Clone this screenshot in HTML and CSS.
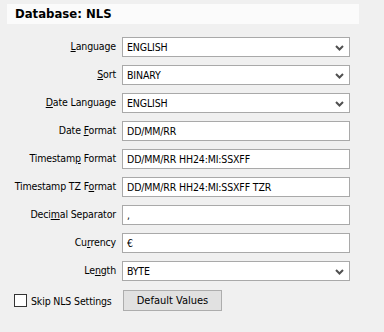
FILE: index.html
```html
<!DOCTYPE html>
<html lang="en">
<head>
    <meta charset="UTF-8">
    <title>Database: NLS</title>
    <link rel="stylesheet" href="styles.css">
</head>
<body>
    <div class="header">Database: NLS</div>

    <!-- NLS parameters -->
    <form class="nls-form">
        <label class="field-label"><u>L</u>anguage</label>
        <div class="combo"><span>ENGLISH</span><svg class="chevron" width="9" height="6" viewBox="0 0 9 6"><path d="M1 1 L4.5 4.5 L8 1" fill="none" stroke="#505050" stroke-width="2"/></svg></div>

        <label class="field-label"><u>S</u>ort</label>
        <div class="combo"><span>BINARY</span><svg class="chevron" width="9" height="6" viewBox="0 0 9 6"><path d="M1 1 L4.5 4.5 L8 1" fill="none" stroke="#505050" stroke-width="2"/></svg></div>

        <label class="field-label"><u>D</u>ate Language</label>
        <div class="combo"><span>ENGLISH</span><svg class="chevron" width="9" height="6" viewBox="0 0 9 6"><path d="M1 1 L4.5 4.5 L8 1" fill="none" stroke="#505050" stroke-width="2"/></svg></div>

        <label class="field-label">Date <u>F</u>ormat</label>
        <input class="text-input" type="text" value="DD/MM/RR">

        <label class="field-label">Timestam<u>p</u> Format</label>
        <input class="text-input" type="text" value="DD/MM/RR HH24:MI:SSXFF">

        <label class="field-label">Timestamp TZ F<u>o</u>rmat</label>
        <input class="text-input" type="text" value="DD/MM/RR HH24:MI:SSXFF TZR">

        <label class="field-label">Deci<u>m</u>al Separator</label>
        <input class="text-input" type="text" value=",">

        <label class="field-label">Cu<u>r</u>rency</label>
        <input class="text-input" type="text" value="€">

        <label class="field-label">Le<u>n</u>gth</label>
        <div class="combo"><span>BYTE</span><svg class="chevron" width="9" height="6" viewBox="0 0 9 6"><path d="M1 1 L4.5 4.5 L8 1" fill="none" stroke="#505050" stroke-width="2"/></svg></div>
    </form>

    <div class="footer">
        <label class="skip"><span class="checkbox"></span>Skip NLS Settings</label>
        <button type="button" class="default-btn">Default Values</button>
    </div>
</body>
</html>
```

FILE: styles.css
```css
body {
    font-family: "DejaVu Sans Condensed", "DejaVu Sans", sans-serif;
    font-size: 10.5px;
    letter-spacing: -0.15px;
    color: #000;
    background-color: #f0f0f0;
    margin: 0;
    padding: 0;
}
.header {
    margin: 4px 25px 0 7px;
    height: 20px;
    line-height: 20px;
    padding-left: 8px;
    background: #fbfbfb;
    font-size: 13px;
    font-weight: bold;
    letter-spacing: 0;
}
.nls-form {
    display: grid;
    grid-template-columns: 116px 228px;
    column-gap: 6px;
    row-gap: 8px;
    margin-top: 13px;
}
.field-label {
    text-align: right;
    line-height: 19px;
}
u {
    text-decoration-thickness: 1px;
    text-underline-offset: 1px;
}
.combo, .text-input {
    box-sizing: border-box;
    height: 20px;
    margin: 0;
    border: 1px solid #a9a9a9;
    background: #fff;
    font-family: inherit;
    font-size: 10.5px;
    letter-spacing: -0.15px;
    color: #000;
    padding: 0 4px;
}
.combo {
    display: flex;
    align-items: center;
    justify-content: space-between;
    padding-right: 5px;
}
.chevron {
    margin-top: 1px;
}
.footer {
    display: grid;
    grid-template-columns: 116px 228px;
    column-gap: 6px;
    align-items: center;
    margin-top: 9px;
}
.skip {
    display: flex;
    align-items: center;
    gap: 4px;
    padding-left: 14px;
    white-space: nowrap;
}
.checkbox {
    box-sizing: border-box;
    flex: none;
    width: 13px;
    height: 13px;
    border: 1px solid #333;
    background: #fff;
}
.default-btn {
    box-sizing: border-box;
    width: 99px;
    height: 21px;
    margin-left: 1px;
    border: 1px solid #adadad;
    background: #e1e1e1;
    font-family: inherit;
    font-size: 11px;
    letter-spacing: 0;
    color: #000;
    padding: 0;
}
```
